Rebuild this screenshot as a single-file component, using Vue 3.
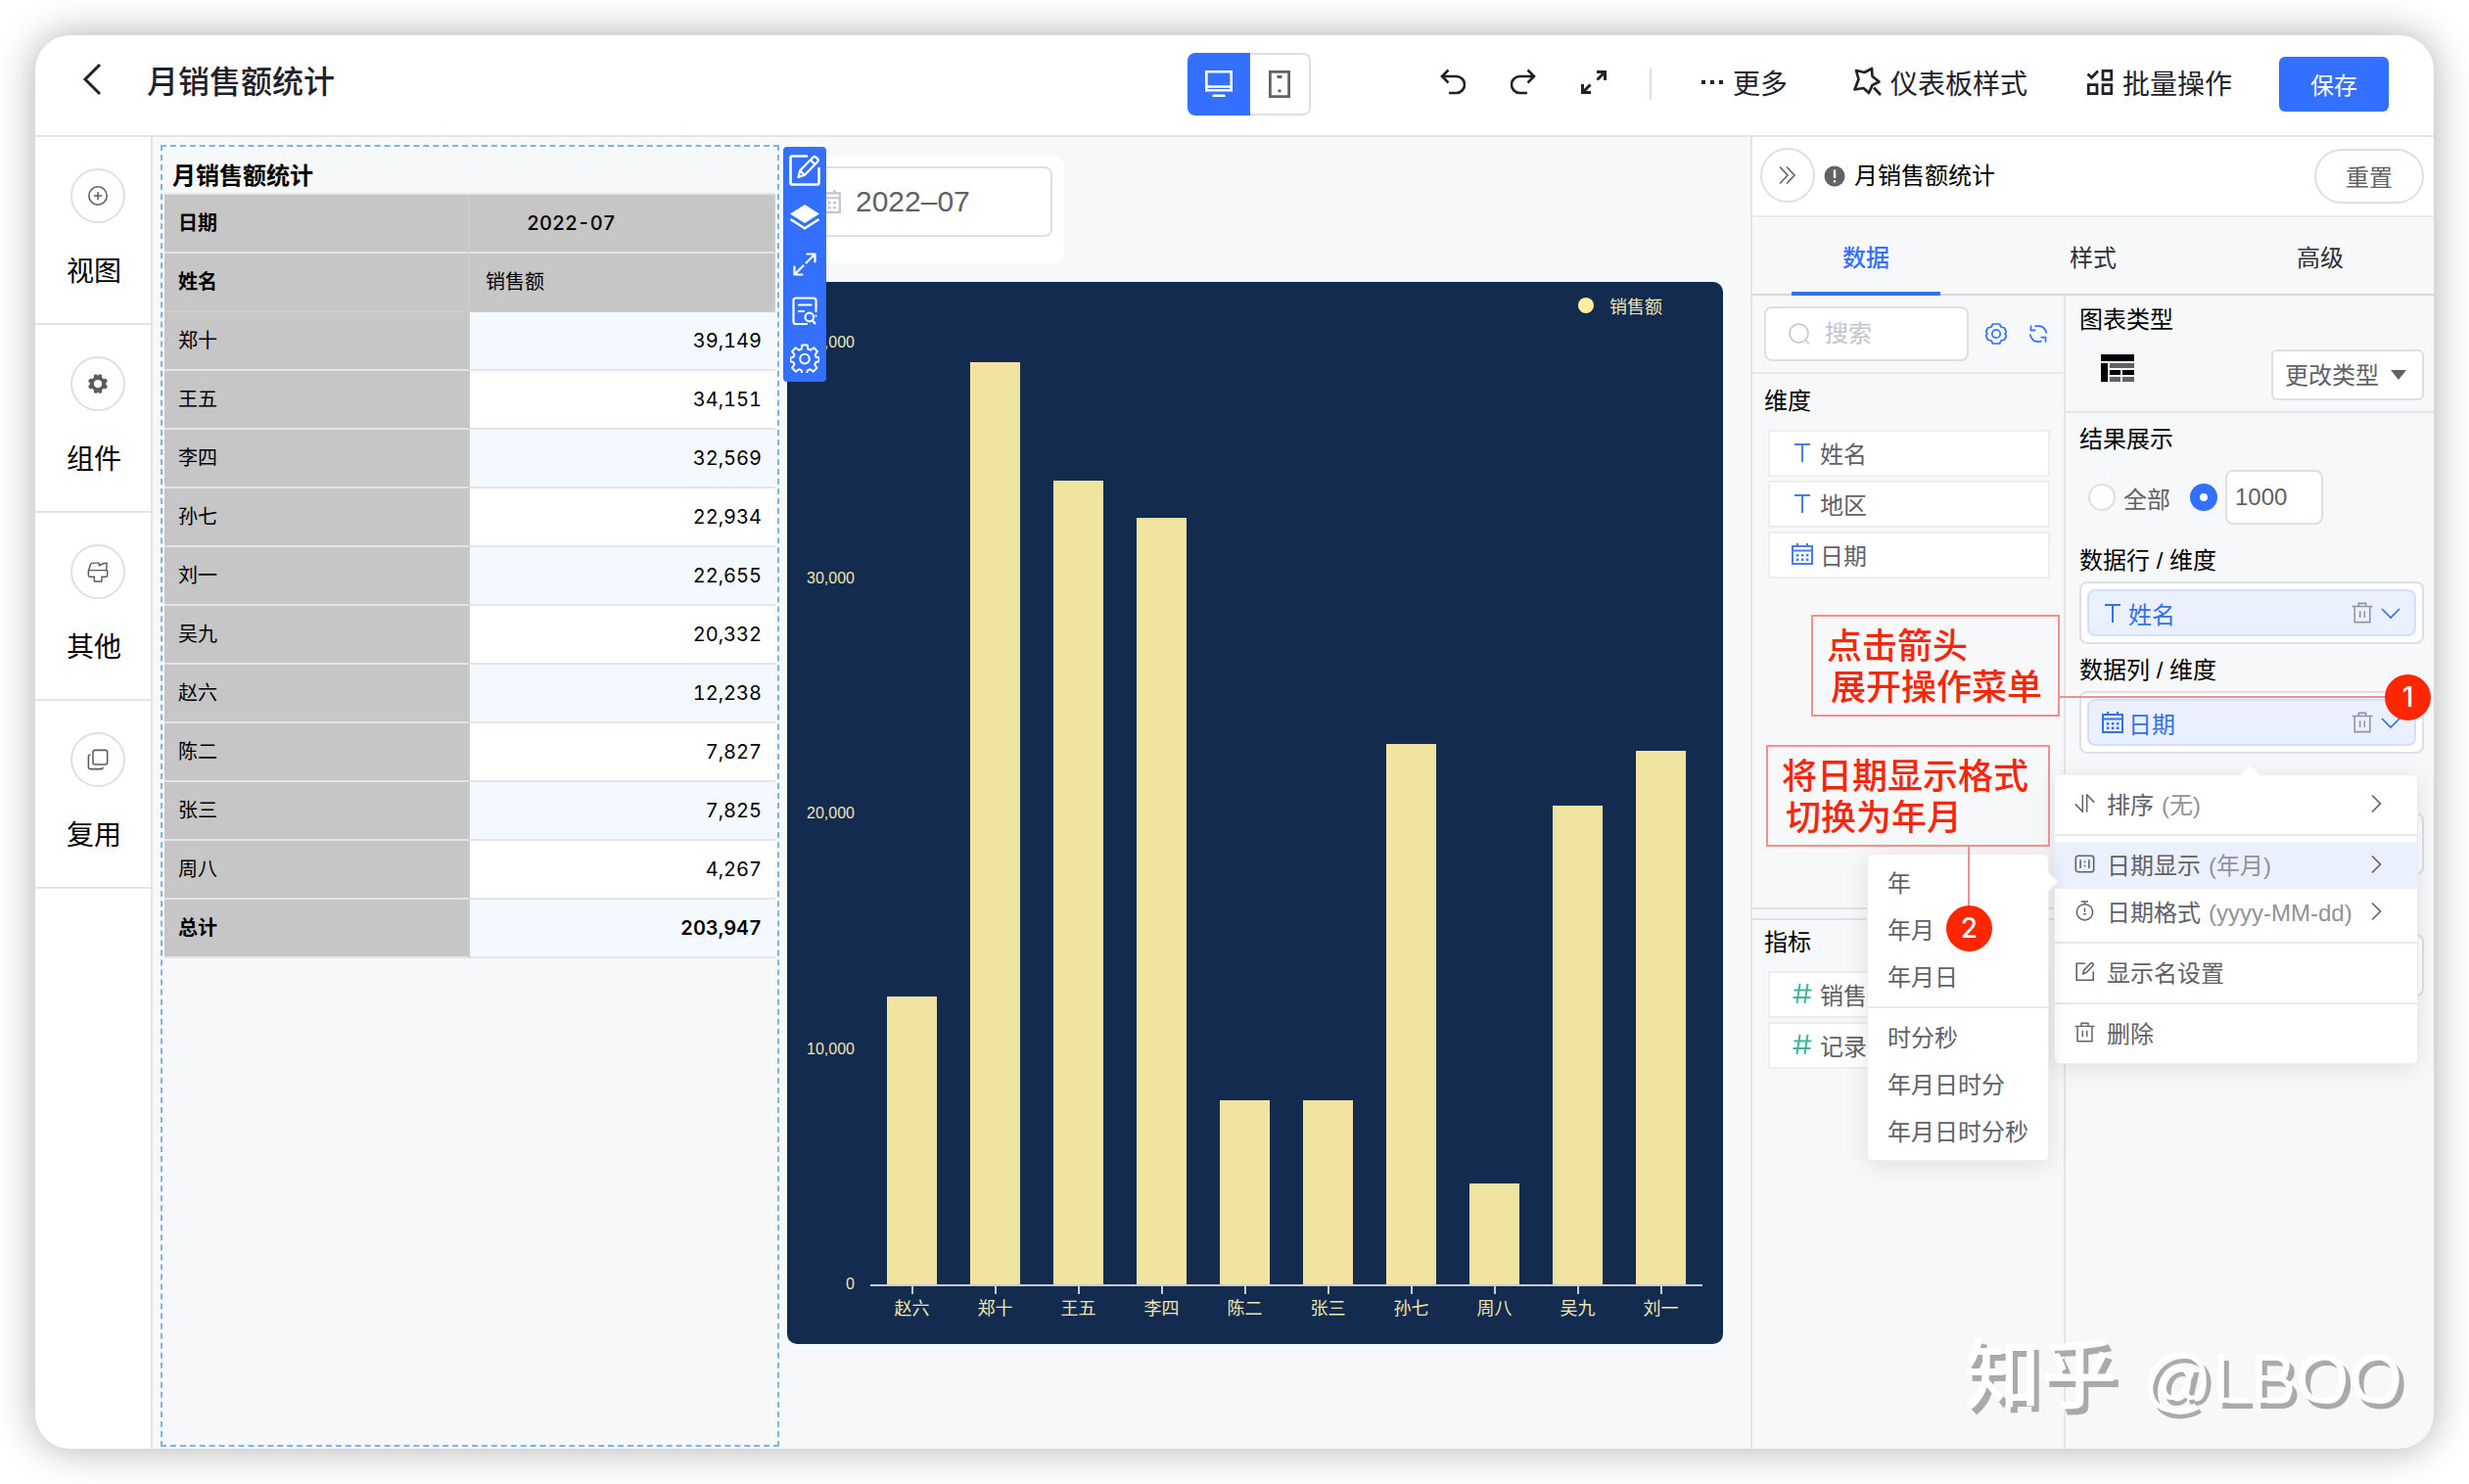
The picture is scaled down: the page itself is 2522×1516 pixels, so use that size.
<script setup>
import { ref } from 'vue'

const title = '月销售额统计'
const limit = ref('1000')
const limitMode = ref('top')
const month = ref('2022–07')
const keyword = ref('')

const sideItems = [
  { icon: 'plus', label: '视图' },
  { icon: 'cog', label: '组件' },
  { icon: 'brush', label: '其他' },
  { icon: 'copy', label: '复用' },
]

const widgetTools = [
  { icon: 'edit', label: '编辑', size: 34 },
  { icon: 'layers', label: '图层', size: 32 },
  { icon: 'zoom', label: '放大', size: 26 },
  { icon: 'detail', label: '查看数据', size: 30 },
  { icon: 'gear', label: '设置', size: 30 },
]

const rows = [
  ['郑十', '39,149'],
  ['王五', '34,151'],
  ['李四', '32,569'],
  ['孙七', '22,934'],
  ['刘一', '22,655'],
  ['吴九', '20,332'],
  ['赵六', '12,238'],
  ['陈二', '7,827'],
  ['张三', '7,825'],
  ['周八', '4,267'],
]

const bars = [
  ['赵六', 12238],
  ['郑十', 39149],
  ['王五', 34151],
  ['李四', 32569],
  ['陈二', 7827],
  ['张三', 7825],
  ['孙七', 22934],
  ['周八', 4267],
  ['吴九', 20332],
  ['刘一', 22655],
]
const axisMax = 40000
const axisLabels = ['40,000', '30,000', '20,000', '10,000', '0']

const dimensions = [
  { icon: 'text', label: '姓名' },
  { icon: 'text', label: '地区' },
  { icon: 'calendar', label: '日期' },
]

const measures = ['销售额', '记录数']

const tabs = ['数据', '样式', '高级']
const activeTab = ref('数据')

const menuGroups = [
  [{ icon: 'sort', label: '排序', hint: '(无)', more: true }],
  [
    { icon: 'ratio', label: '日期显示', hint: '(年月)', more: true, active: true },
    { icon: 'timer', label: '日期格式', hint: '(yyyy-MM-dd)', more: true },
  ],
  [{ icon: 'rename', label: '显示名设置' }],
  [{ icon: 'trash', label: '删除' }],
]

const formatGroups = [
  ['年', '年月', '年月日'],
  ['时分秒', '年月日时分', '年月日时分秒'],
]
</script>

<template>
  <svg class="sprite" aria-hidden="true">
    <symbol id="i-plus" viewBox="0 0 24 24"><g fill="none" stroke="currentColor" stroke-width="1.7"><circle cx="12" cy="12" r="10" /><path d="M12 7.5v9M7.5 12h9" /></g></symbol>
    <symbol id="i-cog" viewBox="0 0 24 24"><path fill="currentColor" fill-rule="evenodd" d="M9 1.5h2l1 1.7 1-1.7h2l1.6 1-.1 2.6 1.6 1.5h3.4l1.2 2.6-1.7 2.1v1.4l1.7 2.1-1.2 2.6h-3.4l-1.6 1.5.1 2.6-1.6 1h-2l-1-1.7-1 1.7H9l-1.600-1 .1-2.600-1.600-1.500H2.500l-1.200-2.600L3 12.700v-1.400L1.300 9.200l1.200-2.600h3.400l1.600-1.500-.1-2.600zM12 7.500a4.500 4.500 0 100 9 4.500 4.500 0 000-9z" /></symbol>
    <symbol id="i-brush" viewBox="0 0 24 24"><path fill="none" stroke="currentColor" stroke-width="1.600" stroke-linejoin="round" d="M1.500 10.500 4 3.500q.4-1.200 1.700-1.200h7.500l.3 3 4-2.300 4.500-.7-.7 8.200M1.500 10.500h21v5.500q0 1.800-1.800 1.800h-4.400v5H8v-5H3.300q-1.800 0-1.800-1.800z" /></symbol>
    <symbol id="i-copy" viewBox="0 0 24 24"><path fill="none" stroke="currentColor" stroke-width="1.700" d="M8.700 1.500h11.600q2.200 0 2.200 2.200v11.600q0 2.200-2.200 2.200H8.700q-2.200 0-2.200-2.200V3.700q0-2.200 2.200-2.200zM3.700 6.500q-2.200 0-2.200 2.200v11.600q0 2.200 2.200 2.200h11.600q2.200 0 2.200-2" /></symbol>

    <symbol id="i-edit" viewBox="0 0 34 34"><g fill="none" stroke="currentColor" stroke-width="2.700" stroke-linecap="round" stroke-linejoin="round"><path d="M19 2.500H4.500q-2 0-2 2v25q0 2 2 2h25q2 0 2-2V15" /><path stroke-width="2.300" d="M10.500 24l1.800-7L25.500 3.700q1.400-1.400 3 0l1.600 1.600q1.500 1.500 0 3L17 21.700zM23 6.500l4.500 4.500M12.300 17.200l4.500 4.500" /></g></symbol>
    <symbol id="i-layers" viewBox="0 0 32 32"><path fill="currentColor" d="M16 3l15 9.500L16 22 1 12.500z" /><path fill="none" stroke="currentColor" stroke-width="2.600" d="M1.500 18L16 27.300 30.500 18" /></symbol>
    <symbol id="i-zoom" viewBox="0 0 26 26"><path fill="none" stroke="currentColor" stroke-width="2.200" stroke-linecap="round" stroke-linejoin="round" d="M15.500 2.500h8v8M23 3l-8.500 8.500M10.500 23.500h-8v-8M3 23l8.500-8.500" /></symbol>
    <symbol id="i-detail" viewBox="0 0 30 30"><g fill="none" stroke="currentColor" stroke-width="2.200" stroke-linecap="round"><path d="M17 28H6q-2.500 0-2.500-2.500V4q0-2.500 2.500-2.500h18q2.500 0 2.500 2.500v11M26.500 19.500v.1M9 8.500h12.500M9 15h5" /><circle cx="19.800" cy="21" r="4.300" /><path d="M23 24.500l2.500 3" /></g></symbol>
    <symbol id="i-gear" viewBox="0 0 30 30"><g fill="none" stroke="currentColor" stroke-width="2" stroke-linejoin="round"><path d="M12.300 1.500h5.400l.6 4 2.700 1.200 3.300-2.400 3.700 3.700-2.300 3.300 1 2.500 3 .600v3.800l-3.500.800-1 2.500 2.300 3.300-3.700 3.800-3.300-2.400-2.600 1.100-.700 3.700h-4.800l-.700-3.700-2.600-1.100-3.300 2.400-3.700-3.800 2.300-3.300-1-2.500-3-.800v-3.800l3-.600 1-2.500L2.100 8l3.700-3.700 3.300 2.400 2.600-1.200z" /><circle cx="15" cy="15.600" r="4.800" /></g></symbol>

    <symbol id="i-text" viewBox="0 0 24 24"><path fill="none" stroke="currentColor" stroke-width="2" d="M4 4h16M12 4v18" /></symbol>
    <symbol id="i-calendar" viewBox="0 0 24 24"><path fill="none" stroke="currentColor" stroke-width="2" d="M2 4h20v18H2zM2 8.500h20M7 1v4M17 1v4" /><path stroke="currentColor" stroke-width="2.400" stroke-dasharray="2.600 2.400" d="M5.800 13.200h13M5.800 17.700h13" /></symbol>
    <symbol id="i-hash" viewBox="0 0 24 24"><path fill="none" stroke="currentColor" stroke-width="2" d="M9.500 2L6.500 22M17.500 2l-3 20M3.500 8.500h18M2.500 16h18" /></symbol>

    <symbol id="i-sort" viewBox="0 0 24 24"><path fill="none" stroke="currentColor" stroke-width="1.700" stroke-linejoin="round" d="M1 13l8.500 9V2M14.500 22.500V2L23 11" /></symbol>
    <symbol id="i-ratio" viewBox="0 0 24 24"><g fill="none" stroke="currentColor" stroke-width="1.800"><rect x="1.500" y="2.500" width="21" height="19" rx="3" /><path d="M7 7v10M17 7v10M12 8.500v2M12 13.500v2" /></g></symbol>
    <symbol id="i-timer" viewBox="0 0 24 24"><g fill="none" stroke="currentColor" stroke-width="1.800"><circle cx="12" cy="13.500" r="9.300" /><path d="M8 1.200h8M12 1.200v3M12 8.500v5M10.500 15.300q1.500 1 3 0" /></g></symbol>
    <symbol id="i-rename" viewBox="0 0 24 24"><path fill="none" stroke="currentColor" stroke-width="1.800" d="M12.500 2.500h-10v19.500h19.500V12M10 14.800l1.200-4.300 7.500-8q1.200-1.300 2.600-.1 1.300 1.300.200 2.700l-7.500 8z" /></symbol>
    <symbol id="i-trash" viewBox="0 0 24 24"><path fill="none" stroke="currentColor" stroke-width="1.700" d="M.5 5h23M3.500 5v17.500h17V5M8 5V1.500h8V5M9.500 10v7.500M14.500 10v7.500" /></symbol>
    <symbol id="i-down" viewBox="0 0 20 20"><path fill="none" stroke="currentColor" stroke-width="1.700" d="M1 6l9 9 9-9" /></symbol>
    <symbol id="i-next" viewBox="0 0 20 20"><path fill="none" stroke="currentColor" stroke-width="1.700" d="M6 1.500l8.500 8.500L6 18.500" /></symbol>
  </svg>

  <div class="window">
    <header class="topbar">
      <div class="heading">
        <button class="plain back" aria-label="返回">
          <svg width="20" height="34" viewBox="0 0 20 34"><path d="M18 2L3 17l15 15" fill="none" stroke="currentColor" stroke-width="3" /></svg>
        </button>
        <h1>{{ title }}</h1>
      </div>
      <div class="device">
        <button class="device-btn on" aria-label="电脑端">
          <svg width="30" height="30" viewBox="0 0 30 30"><path fill="none" stroke="currentColor" stroke-width="2.600" d="M2.300 2.300h25.400v19H2.300zM2.300 17.500h25.400" /><path fill="currentColor" d="M8.500 25.500h13V28h-13z" /></svg>
        </button>
        <button class="device-btn" aria-label="手机端">
          <svg width="24" height="30" viewBox="0 0 24 30"><path fill="none" stroke="currentColor" stroke-width="2.800" d="M2.400 2.400h19.200v25.200H2.400zM9.500 7.500h5M10.500 21.800h3" /></svg>
        </button>
      </div>
      <nav class="actions">
        <button class="plain undo" aria-label="撤销"><svg width="26" height="28" viewBox="0 0 26 28"><path fill="none" stroke="currentColor" stroke-width="2.600" d="M8.500 1.500L2 8l6.500 6.500M2 8h14.500a8.500 8.500 0 010 17H9" /></svg></button>
        <button class="plain redo" aria-label="重做"><svg width="26" height="28" viewBox="0 0 26 28"><path fill="none" stroke="currentColor" stroke-width="2.600" d="M17.500 1.500L24 8l-6.500 6.500M24 8H9.500a8.500 8.500 0 000 17H17" /></svg></button>
        <button class="plain full" aria-label="全屏"><svg width="26" height="28" viewBox="0 0 26 28"><path fill="none" stroke="currentColor" stroke-width="3" d="M16 3.500h8.500V12M24 4l-7.500 7.500M10 24.500H1.500V16M2 24l7.500-7.500" /></svg></button>
        <i class="bar"></i>
        <button class="plain more"><svg width="24" height="6" viewBox="0 0 24 6"><path fill="currentColor" d="M1 1h4v4H1zM10 1h4v4h-4zM19 1h4v4h-4z" /></svg>更多</button>
        <button class="plain style"><svg width="30" height="32" viewBox="0 0 30 32"><path fill="none" stroke="currentColor" stroke-width="2.700" stroke-linejoin="round" d="M4 4l8.500 2L20 2l.5 8 7 5.500-7 3.500-3.500 8-5.500-5L2.500 23.500 6.500 13zM22 21.500l7 7.500" /></svg>仪表板样式</button>
        <button class="plain batch"><svg width="28" height="28" viewBox="0 0 28 28"><path fill="none" stroke="currentColor" stroke-width="2.700" d="M1.500 5.500L5.500 9.500l6.500-7M17 2.300h8.700v9H17zM2.300 16.700H11v9H2.300zM17 16.700h8.700v9H17z" /></svg>批量操作</button>
        <button class="save">保存</button>
      </nav>
    </header>

    <div class="body">
      <aside class="side">
        <button v-for="item in sideItems" :key="item.label" class="side-item">
          <span class="side-ring"><svg width="22" height="22"><use :href="'#i-' + item.icon" /></svg></span>
          <span class="side-label">{{ item.label }}</span>
        </button>
      </aside>

      <main class="canvas">
        <section class="widget">
          <h2>{{ title }}</h2>
          <table class="pivot">
            <thead>
              <tr><th>日期</th><th class="period">2022-07</th></tr>
              <tr><th>姓名</th><th class="measure">销售额</th></tr>
            </thead>
            <tbody>
              <tr v-for="row in rows" :key="row[0]"><th>{{ row[0] }}</th><td>{{ row[1] }}</td></tr>
              <tr class="total"><th>总计</th><td>203,947</td></tr>
            </tbody>
          </table>
          <div class="tools">
            <button v-for="tool in widgetTools" :key="tool.icon" :aria-label="tool.label">
              <svg :width="tool.size" :height="tool.size"><use :href="'#i-' + tool.icon" /></svg>
            </button>
          </div>
        </section>

        <div class="right">
          <div class="filter">
            <label class="date">
              <svg width="26" height="26"><use href="#i-calendar" /></svg>
              <input v-model="month" type="text" aria-label="月份" />
            </label>
          </div>
          <section class="chart">
            <div class="legend"><i></i>销售额</div>
            <div class="axis-y"><span v-for="label in axisLabels" :key="label">{{ label }}</span></div>
            <div class="plot">
              <div v-for="bar in bars" :key="bar[0]" class="slot">
                <div class="column" :style="{ height: (bar[1] / axisMax) * 100 + '%' }"></div>
              </div>
            </div>
            <div class="axis-x"><span v-for="bar in bars" :key="bar[0]">{{ bar[0] }}</span></div>
          </section>
        </div>
      </main>

      <aside class="panel">
        <div class="panel-head">
          <button class="collapse" aria-label="收起"><svg width="20" height="20" viewBox="0 0 20 20"><path fill="none" stroke="currentColor" stroke-width="1.600" d="M2 1.500l8 8.500-8 8.500M9 1.500l8 8.500-8 8.500" /></svg></button>
          <svg class="info" width="22" height="22" viewBox="0 0 22 22"><circle cx="11" cy="11" r="10.500" fill="#606266" /><path d="M11 4.500v8.500M11 15v2.500" stroke="#fff" stroke-width="2.400" /></svg>
          <h3>{{ title }}</h3>
          <button class="reset">重置</button>
        </div>
        <div class="tabs">
          <button v-for="tab in tabs" :key="tab" :class="{ on: tab === activeTab }" @click="activeTab = tab">{{ tab }}</button>
        </div>
        <div class="cols">
          <div class="fields">
            <div class="search-row">
              <label class="search">
                <svg width="24" height="24" viewBox="0 0 24 24"><g fill="none" stroke="currentColor" stroke-width="1.600"><circle cx="11.500" cy="11.500" r="9.500" /><path d="M18 18.500l4 4" /></g></svg>
                <input v-model="keyword" type="text" placeholder="搜索" aria-label="搜索" />
              </label>
              <button class="plain tint" aria-label="字段设置"><svg width="22" height="22" viewBox="0 0 22 22"><g fill="none" stroke="currentColor" stroke-width="1.700" stroke-linejoin="round"><path d="M7.500 1h7l1.500 3 3.500 1L21.500 9l-1.500 2 1.500 2-2 4-3.500 1-1.500 3h-7L6 18l-3.500-1-2-4L2 11 .5 9l2-4L6 4z" /><circle cx="11" cy="11" r="4.200" /></g></svg></button>
              <button class="plain tint" aria-label="刷新"><svg width="20" height="20" viewBox="0 0 20 20"><path fill="none" stroke="currentColor" stroke-width="1.700" d="M6.500 2.300Q16 0 18.500 9.500M2.500 1.500v4.800h4.800M13.500 17.700Q4 20 1.500 10.500M17.500 18.500v-4.800h-4.800" /></svg></button>
            </div>
            <div class="field-group dims">
              <h4>维度</h4>
              <div v-for="d in dimensions" :key="d.label" class="field"><svg width="24" height="24"><use :href="'#i-' + d.icon" /></svg>{{ d.label }}</div>
            </div>
            <div class="field-group meas">
              <h4>指标</h4>
              <div v-for="m in measures" :key="m" class="field num"><svg width="24" height="24"><use href="#i-hash" /></svg>{{ m }}</div>
            </div>
          </div>

          <div class="config">
            <div class="type">
              <h4>图表类型</h4>
              <div class="type-row">
                <svg width="34" height="28" viewBox="0 0 34 28"><path fill="#000" d="M0 0h34v7H0zM0 9h7v19H0zM9 16h11v5H9zM22 16h12v5H22z" /><path fill="#606266" d="M9 9h25v5H9zM9 23h11v5H9zM22 23h12v5H22z" /></svg>
                <div class="select"><select aria-label="图表类型"><option>更改类型</option></select><i></i></div>
              </div>
            </div>
            <h4 class="result">结果展示</h4>
            <div class="limit">
              <label><input v-model="limitMode" type="radio" name="limit" value="all" />全部</label>
              <input v-model="limitMode" type="radio" name="limit" value="top" aria-label="限制行数" />
              <input v-model="limit" class="count" type="text" aria-label="行数" />
            </div>
            <h4>数据行 / 维度</h4>
            <div class="drop">
              <div class="chip"><svg width="24" height="24"><use href="#i-text" /></svg><span>姓名</span>
                <button class="plain bin" aria-label="删除"><svg width="22" height="22"><use href="#i-trash" /></svg></button>
                <button class="plain" aria-label="展开"><svg width="20" height="20"><use href="#i-down" /></svg></button>
              </div>
            </div>
            <h4>数据列 / 维度</h4>
            <div class="drop">
              <div class="chip"><svg width="24" height="24"><use href="#i-calendar" /></svg><span>日期</span>
                <button class="plain bin" aria-label="删除"><svg width="22" height="22"><use href="#i-trash" /></svg></button>
                <button class="plain" aria-label="展开"><svg width="20" height="20"><use href="#i-down" /></svg></button>
              </div>
            </div>
            <div class="drop spare"></div>
            <div class="drop spare"></div>
          </div>
        </div>

        <div class="menu main-menu">
          <div v-for="(group, g) in menuGroups" :key="g" class="menu-group">
            <button v-for="item in group" :key="item.label" :class="{ on: item.active }">
              <svg width="21" height="21"><use :href="'#i-' + item.icon" /></svg>
              <span>{{ item.label }}<em v-if="item.hint">{{ item.hint }}</em></span>
              <svg v-if="item.more" class="next" width="20" height="20"><use href="#i-next" /></svg>
            </button>
          </div>
        </div>
        <div class="menu sub-menu">
          <div v-for="(group, g) in formatGroups" :key="g" class="menu-group">
            <button v-for="item in group" :key="item">{{ item }}</button>
          </div>
        </div>

        <p class="note note-a"><span>点击箭头</span><span class="indent">展开操作菜单</span></p>
        <i class="lead lead-a"></i>
        <b class="pin pin-a">1</b>
        <p class="note note-b"><span>将日期显示格式</span><span class="indent">切换为年月</span></p>
        <i class="lead lead-b"></i>
        <b class="pin pin-b">2</b>
      </aside>
    </div>

    <div class="mark"><span>知乎</span><span class="handle">@LBOO</span></div>
  </div>
</template>

<style>
body {
  margin: 0;
  background: #fff;
}
</style>

<style scoped>
.sprite {
  position: absolute;
  width: 0;
  height: 0;
}
.window {
  position: relative;
  display: flex;
  flex-direction: column;
  box-sizing: border-box;
  min-height: calc(100vh - 72px);
  margin: 36px;
  border-radius: 36px;
  background: #f6f8fa;
  box-shadow: 0 0 40px rgba(0, 0, 0, 0.32);
  font-family: "Liberation Sans", "Noto Sans CJK SC", sans-serif;
  font-size: 24px;
  color: #000;
}
.window *,
.window *::before,
.window *::after {
  box-sizing: border-box;
}
svg {
  display: block;
  flex: none;
}
button,
input,
select {
  margin: 0;
  padding: 0;
  border: 0;
  background: none;
  font: inherit;
  color: inherit;
}
h1, h2, h3, h4, p {
  margin: 0;
}
.plain {
  display: flex;
  align-items: center;
}

/* top bar */
.topbar {
  display: flex;
  align-items: center;
  height: 104px;
  padding: 0 46px 2px 48px;
  border-bottom: 2px solid #e2e4e6;
  border-radius: 36px 36px 0 0;
  background: #fff;
  color: #1f2329;
}
.heading {
  display: flex;
  flex: 1;
  align-items: center;
  gap: 46px;
  padding-bottom: 4px;
}
.back {
  padding-bottom: 6px;
}
h1 {
  font-size: 32px;
  font-weight: 500;
  line-height: 44px;
}
.device {
  display: flex;
  margin-right: 132px;
}
.device-btn {
  display: flex;
  align-items: center;
  justify-content: center;
  width: 62px;
  height: 64px;
  border: 2px solid #dcdfe6;
  border-left: 0;
  border-radius: 0 8px 8px 0;
  color: #606266;
}
.device-btn.on {
  width: 64px;
  border: 0;
  border-radius: 8px 0 0 8px;
  background: #3370ff;
  color: #fff;
}
.actions {
  display: flex;
  align-items: center;
  font-size: 28px;
}
.actions .plain {
  padding-bottom: 4px;
}
.redo,
.full {
  margin-left: 46px;
}
.bar {
  width: 2px;
  height: 32px;
  margin: 0 50px 0 44px;
  background: #dcdfe6;
}
.more,
.style,
.batch {
  gap: 9px;
}
.style {
  margin-left: 66px;
}
.batch {
  margin-left: 60px;
}
.save {
  width: 112px;
  height: 56px;
  margin-left: 48px;
  padding-bottom: 2px;
  border-radius: 6px;
  background: #3370ff;
  font-size: 24px;
  color: #fff;
}

/* left rail */
.body {
  display: flex;
  flex: 1;
}
.side {
  flex: none;
  width: 120px;
  border-right: 2px solid #e2e4e6;
  border-radius: 0 0 0 36px;
  background: #fff;
}
.side-item {
  display: flex;
  flex-direction: column;
  align-items: center;
  width: 100%;
  height: 192px;
  padding-top: 32px;
  border-bottom: 2px solid #e2e4e6;
}
.side-ring {
  display: flex;
  align-items: center;
  justify-content: center;
  width: 56px;
  height: 56px;
  margin-left: 10px;
  border: 2px solid #dfe0e2;
  border-radius: 50%;
  color: #5a5c60;
}
.side-label {
  margin-top: 30px;
  padding-left: 2px;
  font-size: 28px;
  line-height: 40px;
}

/* canvas */
.canvas {
  display: grid;
  flex: 1;
  grid-template-columns: 632fr 956fr;
  gap: 8px;
  padding: 8px 28px 2px 8px;
}
.widget {
  position: relative;
  border: 2px dashed #7ab7e0;
  padding: 0 2px;
}
h2 {
  padding: 12px 0 0 8px;
  font-size: 24px;
  font-weight: 600;
  line-height: 35px;
}
.pivot {
  width: 100%;
  border-spacing: 0;
  table-layout: fixed;
  border-top: 2px solid #e2e4e8;
  font-family: Inter, "Noto Sans CJK SC", sans-serif;
  font-size: 20px;
  font-variant-numeric: tabular-nums;
}
.pivot th,
.pivot td {
  height: 60px;
  padding: 0 14px;
  border-bottom: 2px solid #e2e4e6;
  line-height: 28px;
}
.pivot th {
  border-right: 2px solid #cbcbcb;
  background: #c6c6c6;
  font-weight: 400;
  text-align: left;
}
.pivot thead th {
  font-weight: 600;
}
.pivot thead tr:last-child th {
  border-bottom-color: #cacaca;
}
.pivot thead .period {
  padding-left: 58px;
  font-weight: 500;
}
.pivot thead .measure {
  padding-left: 16px;
  font-weight: 400;
}
.pivot td {
  background: #fff;
  text-align: right;
}
.pivot tbody tr:nth-child(odd) td {
  background: #f4f8ff;
}
.pivot .total th,
.pivot .total td {
  font-weight: 600;
}
.tools {
  position: absolute;
  top: 0;
  left: calc(100% + 6px);
  z-index: 2;
  width: 44px;
  border-radius: 4px;
  background: #3370ff;
  color: #fff;
}
.tools button {
  display: flex;
  align-items: center;
  justify-content: center;
  width: 44px;
  height: 48px;
}
.filter {
  width: 283px;
  height: 109px;
  margin-top: 12px;
  padding: 10px 12px;
  border-radius: 10px;
  background: #fff;
}
.date {
  display: flex;
  align-items: center;
  gap: 14px;
  height: 72px;
  padding-left: 16px;
  border: 2px solid #dcdfe6;
  border-radius: 8px;
  font-size: 30px;
  color: #c0c4cc;
}
.date input {
  width: 180px;
  color: #606266;
}

/* bar chart */
.chart {
  display: grid;
  grid-template: 62px 962px 61px / 85px 1fr;
  position: relative;
  margin-top: 19px;
  padding-right: 21px;
  border-radius: 10px;
  background: #132b4e;
  color: #f0e6b0;
  font-size: 18px;
}
.legend {
  display: flex;
  grid-column: 1 / 3;
  align-items: center;
  justify-content: flex-end;
  gap: 16px;
  height: 48px;
  padding-right: 41px;
}
.legend i {
  width: 16px;
  height: 16px;
  border-radius: 50%;
  background: #fdeea0;
}
.axis-y {
  display: flex;
  flex-direction: column;
  justify-content: space-between;
  margin: -10px 16px -10px 0;
  font-size: 16px;
  line-height: 20px;
  text-align: right;
}
.plot {
  display: flex;
}
.slot {
  display: flex;
  flex: 1;
  align-items: flex-end;
  justify-content: center;
}
.column {
  width: 60%;
  background: #f0e4a0;
}
.axis-x {
  display: flex;
  grid-column: 2;
  border-top: 2px solid #c9cdd3;
}
.axis-x span {
  flex: 1;
  line-height: 30px;
  text-align: center;
}
.axis-x span::before {
  content: "";
  display: block;
  width: 2px;
  height: 8px;
  margin: 0 auto;
  background: #c9cdd3;
}

/* settings panel */
.panel {
  position: relative;
  display: flex;
  flex: none;
  flex-direction: column;
  width: 698px;
  border-left: 2px solid #e2e4e6;
}
.panel-head {
  display: flex;
  align-items: center;
  height: 82px;
  padding: 0 10px 2px 8px;
  border-bottom: 2px solid #e9ebed;
  background: #fff;
}
.collapse {
  display: flex;
  align-items: center;
  justify-content: center;
  width: 56px;
  height: 56px;
  border: 2px solid #dfe0e2;
  border-radius: 50%;
  color: #606266;
}
.info {
  margin: 2px 9px 0;
}
h3,
h4 {
  font-size: 24px;
  font-weight: 400;
  line-height: 34px;
}
h3 {
  flex: 1;
  padding-top: 2px;
}
.reset {
  width: 112px;
  height: 56px;
  margin-top: 2px;
  padding-bottom: 2px;
  border: 2px solid #dcdfe6;
  border-radius: 28px;
  color: #606266;
}
.tabs {
  display: flex;
  height: 80px;
  border-bottom: 2px solid #d5d8dc;
}
.tabs button {
  position: relative;
  flex: 1;
  color: #303133;
}
.tabs .on {
  color: #3370ff;
  font-weight: 500;
}
.tabs .on::after {
  content: "";
  position: absolute;
  bottom: -2px;
  left: 40px;
  right: 40px;
  height: 4px;
  background: #3370ea;
}
.cols {
  display: flex;
  flex: 1;
}
.fields {
  flex: none;
  width: 320px;
  border-right: 2px solid #e2e4e6;
}
.search-row {
  display: flex;
  align-items: center;
  height: 80px;
  padding-left: 12px;
  border-bottom: 2px solid #e6e8ea;
}
.search {
  display: flex;
  align-items: center;
  gap: 14px;
  width: 209px;
  height: 56px;
  padding-left: 22px;
  border: 2px solid #dcdfe6;
  border-radius: 8px;
  background: #fff;
  color: #c0c4cc;
}
.search input {
  width: 120px;
  color: #606266;
}
.search input::placeholder {
  color: #c0c4cc;
  opacity: 1;
}
.tint {
  margin-left: 17px;
  color: #3370ff;
}
.tint + .tint {
  margin-left: 22px;
}
.field-group {
  padding: 11px 14px 0 12px;
}
.dims {
  height: 547px;
  border-bottom: 2px solid #dfe1e4;
}
.meas {
  margin-top: 9px;
  padding-top: 6px;
  border-top: 2px solid #dfe1e4;
}
.field-group h4 {
  margin-bottom: 12px;
}
.field {
  display: flex;
  align-items: center;
  gap: 6px;
  height: 48px;
  margin: 0 0 4px 4px;
  padding: 0 0 2px 21px;
  border: 2px solid #ebedf0;
  background: #fff;
  color: #606266;
}
.field svg {
  color: #4a7ee0;
}
.num svg {
  color: #3fb5a0;
}
.config {
  flex: 1;
  padding: 8px 10px 0 14px;
}
.type {
  height: 112px;
  margin: 0 -10px 10px -14px;
  padding: 0 10px 0 14px;
  border-bottom: 2px solid #e2e4e6;
}
.type-row {
  display: flex;
  justify-content: space-between;
  padding: 13px 0 0 22px;
}
.type-row > svg {
  margin-top: 5px;
}
.select {
  position: relative;
  width: 156px;
}
.select select {
  appearance: none;
  width: 100%;
  height: 52px;
  padding: 0 12px;
  border: 2px solid #dcdfe6;
  border-radius: 6px;
  background: #fff;
  color: #606266;
}
.select i {
  position: absolute;
  top: 21px;
  right: 18px;
  border: 8px solid transparent;
  border-top: 10px solid #606266;
  border-bottom: 0;
  pointer-events: none;
}
.limit {
  display: flex;
  align-items: center;
  margin: 14px 0 20px 9px;
  color: #606266;
}
.limit label {
  display: flex;
  align-items: center;
  gap: 8px;
  margin-right: 20px;
}
.limit input[type="radio"] {
  appearance: none;
  width: 28px;
  height: 28px;
  border: 2px solid #dcdfe6;
  border-radius: 50%;
  background: #fff;
}
.limit input[type="radio"]:checked {
  border: 10px solid #3370ff;
}
.limit .count {
  width: 100px;
  height: 56px;
  margin-left: 8px;
  padding-left: 8px;
  border: 2px solid #dcdfe6;
  border-radius: 8px;
  background: #fff;
}
.drop {
  height: 64px;
  margin: 4px 0 10px;
  padding: 6px;
  border: 2px solid #dcdfe6;
  border-radius: 8px;
  background: #fff;
}
.spare {
  margin: 60px 0 0;
}
.chip {
  display: flex;
  align-items: center;
  gap: 4px;
  height: 48px;
  padding: 0 14px 0 12px;
  border: 2px solid #d3dffa;
  border-radius: 8px;
  background: #eaf0fd;
  color: #3370ea;
}
.chip span {
  flex: 1;
}
.bin {
  margin-right: 4px;
  color: #8f959e;
}

/* floating menus */
.menu {
  position: absolute;
  z-index: 3;
  border: 1px solid #ebeef5;
  border-radius: 6px;
  background: #fff;
  box-shadow: 0 4px 24px rgba(0, 0, 0, 0.1);
  color: #606266;
}
.menu::before {
  content: "";
  position: absolute;
  border: 10px solid transparent;
}
.main-menu {
  top: 651px;
  right: 16px;
  width: 372px;
  padding: 6px 0;
}
.main-menu::before {
  top: -20px;
  left: 189px;
  border-bottom-color: #fff;
}
.sub-menu {
  top: 732px;
  right: 393px;
  width: 186px;
  padding: 5px 0;
}
.sub-menu::before {
  top: 18px;
  right: -20px;
  border-left-color: #fff;
}
.menu-group + .menu-group {
  margin-top: 6px;
  padding-top: 6px;
  border-top: 2px solid #e6e8f0;
}
.menu button {
  display: flex;
  align-items: center;
  width: 100%;
  height: 48px;
  padding: 0 0 3px 20px;
  white-space: nowrap;
}
.main-menu button {
  gap: 12px;
  padding-right: 32px;
}
.menu .on {
  background: #eaf0fe;
}
.menu span {
  flex: 1;
  text-align: left;
}
.menu em {
  margin-left: 8px;
  font-style: normal;
  color: #909399;
}

/* call-outs */
.note {
  position: absolute;
  z-index: 4;
  display: flex;
  flex-direction: column;
  padding: 10px 14px 6px;
  border: 2px solid #f09090;
  font-size: 36px;
  font-weight: 500;
  line-height: 42px;
  color: #f5270b;
  white-space: nowrap;
}
.indent {
  margin-left: 4px;
}
.note-a {
  top: 488px;
  right: 382px;
  width: 254px;
}
.note-b {
  top: 621px;
  right: 392px;
  width: 290px;
}
.lead {
  position: absolute;
  z-index: 4;
  background: #f09090;
}
.lead-a {
  top: 571px;
  right: 46px;
  width: 336px;
  height: 2px;
}
.lead-b {
  top: 724px;
  right: 474px;
  width: 2px;
  height: 64px;
}
.pin {
  position: absolute;
  z-index: 5;
  width: 47px;
  height: 47px;
  border-radius: 50%;
  background: #ff2600;
  font-family: Inter, sans-serif;
  font-size: 28px;
  font-weight: 500;
  line-height: 46px;
  text-align: center;
  color: #fff;
}
.pin-a {
  top: 549px;
  right: 3px;
}
.pin-b {
  top: 785px;
  right: 451px;
}
.mark {
  position: absolute;
  right: 32px;
  bottom: 26px;
  z-index: 6;
  display: flex;
  align-items: baseline;
  gap: 26px;
  font-size: 78px;
  font-weight: 500;
  line-height: 90px;
  color: #fff;
  text-shadow: 5px 6px 0 #aaa;
}
.handle {
  font-size: 70px;
  font-weight: 400;
}
</style>
